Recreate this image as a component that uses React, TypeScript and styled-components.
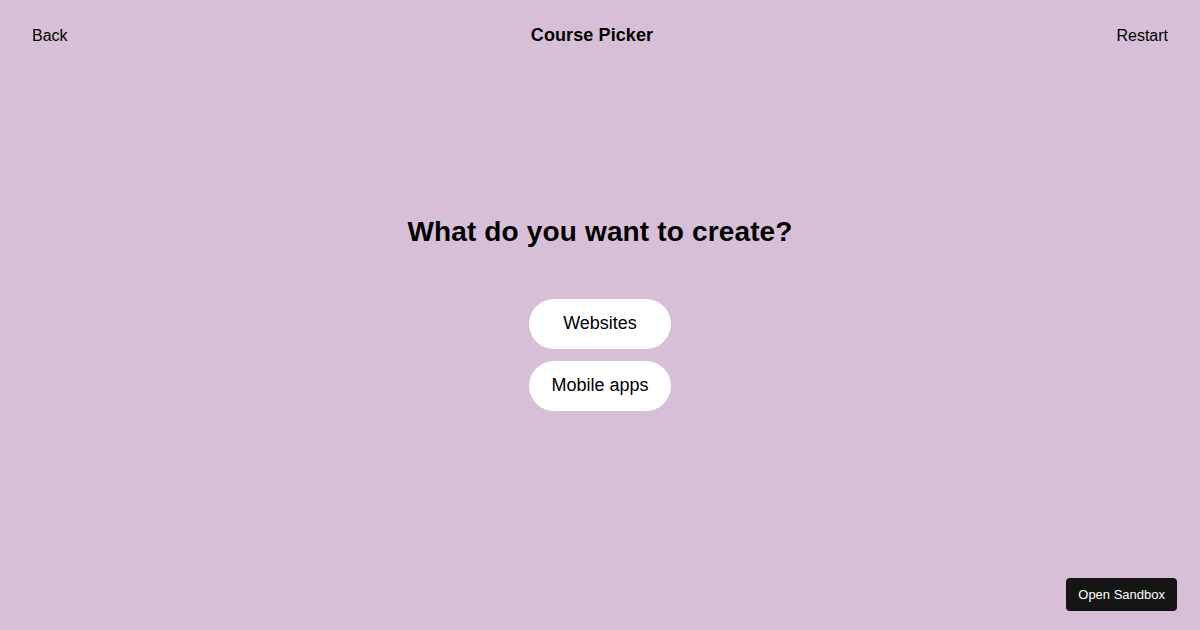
import React from "react";
import styled, { createGlobalStyle } from "styled-components";

const GlobalStyle = createGlobalStyle`
  * { box-sizing: border-box; }
  html, body { margin: 0; padding: 0; }
  body {
    background: #d8bfd8;
    font-family: "Liberation Sans", Arial, sans-serif;
    color: #000;
  }
`;

const Page = styled.div`
  height: 630px;
  display: grid;
  grid-template-rows: 70px 1fr 74px;
`;

const TopBar = styled.header`
  display: flex;
  justify-content: space-between;
  align-items: center;
  padding: 1px 32px 0;
  font-size: 16px;
`;

const NavLink = styled.span`
  color: #000;
  cursor: pointer;
`;

const Title = styled.h1`
  margin: 0;
  font-size: 18px;
  font-weight: 700;
  letter-spacing: 0.1px;
`;

const Main = styled.main`
  display: flex;
  flex-direction: column;
  align-items: center;
  justify-content: center;
`;

const Question = styled.h2`
  margin: 0 0 51px;
  font-size: 28px;
  line-height: 32px;
  font-weight: 700;
  letter-spacing: 0.15px;
`;

const Choices = styled.div`
  display: inline-flex;
  flex-direction: column;
  align-items: stretch;
  gap: 12px;
`;

const Choice = styled.button`
  height: 50px;
  padding: 0 22px;
  border: none;
  border-radius: 25px;
  background: #fff;
  color: #000;
  font-family: inherit;
  font-size: 18px;
  cursor: pointer;
`;

const SandboxButton = styled.button`
  position: fixed;
  right: 23px;
  bottom: 19px;
  height: 33px;
  padding: 0 12px;
  border: none;
  border-radius: 4px;
  background: #151515;
  color: #fff;
  font-family: inherit;
  font-size: 13px;
`;

export default function App() {
  return (
    <>
      <GlobalStyle />
      <Page>
        <TopBar>
          <NavLink>Back</NavLink>
          <Title>Course Picker</Title>
          <NavLink>Restart</NavLink>
        </TopBar>
        <Main>
          <Question>What do you want to create?</Question>
          <Choices>
            <Choice>Websites</Choice>
            <Choice>Mobile apps</Choice>
          </Choices>
        </Main>
        <div />
      </Page>
      <SandboxButton>Open Sandbox</SandboxButton>
    </>
  );
}
